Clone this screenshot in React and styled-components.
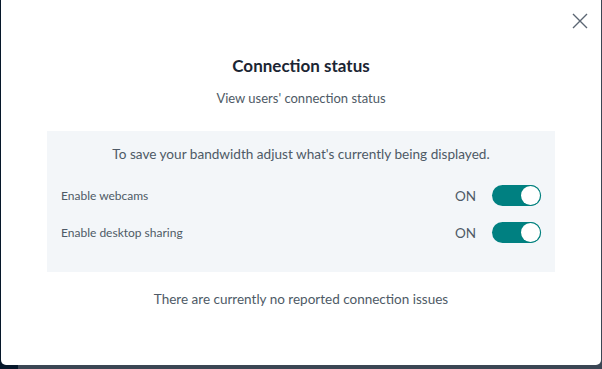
import React from "react";
import styled, { createGlobalStyle } from "styled-components";

// ========================================
// CONNECTION STATUS MODAL
// ========================================

const Global = createGlobalStyle`
  html, body {
    margin: 0;
    padding: 0;
    height: 369px;
    overflow: hidden;
    background: #3b4654;
    font-family: Lato, "Liberation Sans", sans-serif;
  }
`;

const Toggle = ({ on }) => (
  <ToggleRow>
    <ToggleLabel>{on ? "ON" : "OFF"}</ToggleLabel>
    <Track on={on ? 1 : 0}>
      <Knob />
    </Track>
  </ToggleRow>
);

const App = () => (
  <>
    <Global />
    <Backdrop>
      <Modal>
        <CloseButton aria-label="Close">
          <svg width="16" height="16" viewBox="0 0 16 16">
            <path d="M1 1 L15 15 M15 1 L1 15" stroke="#5b6673" strokeWidth="1.4" fill="none" />
          </svg>
        </CloseButton>
        <Title>Connection status</Title>
        <Subtitle>View users' connection status</Subtitle>
        <Panel>
          <PanelHint>To save your bandwidth adjust what's currently being displayed.</PanelHint>
          <SettingRow>
            <SettingLabel>Enable webcams</SettingLabel>
            <Toggle on />
          </SettingRow>
          <SettingRow>
            <SettingLabel>Enable desktop sharing</SettingLabel>
            <Toggle on />
          </SettingRow>
        </Panel>
        <Footer>There are currently no reported connection issues</Footer>
      </Modal>
    </Backdrop>
  </>
);

export default App;

// ========================================
// STYLES
// ========================================

const Backdrop = styled.div`
  height: 369px;
  padding: 0 1px 0 1px;
  box-sizing: border-box;
  background: linear-gradient(to right, #06172a 0 18px, #3b4654 18px);
`;

const Modal = styled.div`
  position: relative;
  height: 365px;
  background: #fff;
  border-radius: 0 0 5px 5px;
  display: flex;
  flex-direction: column;
  align-items: center;
  box-sizing: border-box;
  padding-top: 55px;
`;

const CloseButton = styled.button`
  position: absolute;
  top: 12px;
  right: 12px;
  width: 18px;
  height: 18px;
  padding: 0;
  border: 0;
  background: none;
  display: flex;
  align-items: center;
  justify-content: center;
`;

const Title = styled.h2`
  margin: 0;
  font-size: 17px;
  font-weight: 700;
  color: #1b2533;
  line-height: 22px;
`;

const Subtitle = styled.p`
  margin: 12px 0 0;
  font-size: 13px;
  color: #4e5a66;
  line-height: 18px;
`;

const Panel = styled.div`
  margin-top: 24px;
  width: 508px;
  height: 141px;
  box-sizing: border-box;
  background: #f3f6f9;
  padding: 14px 14px 0;
  display: flex;
  flex-direction: column;
`;

const PanelHint = styled.p`
  margin: 0 0 14px;
  text-align: center;
  font-size: 13.6px;
  color: #4e5a66;
  line-height: 18px;
`;

const SettingRow = styled.div`
  display: flex;
  align-items: center;
  justify-content: space-between;
  height: 37px;
`;

const SettingLabel = styled.span`
  font-size: 12px;
  color: #4e5a66;
`;

const ToggleRow = styled.div`
  display: flex;
  align-items: center;
  gap: 16px;
`;

const ToggleLabel = styled.span`
  font-size: 13.5px;
  color: #4e5a66;
`;

const Track = styled.div`
  width: 49px;
  height: 21px;
  border-radius: 11px;
  background: ${p => (p.on ? "#008081" : "#c4ccd5")};
  display: flex;
  align-items: center;
  justify-content: ${p => (p.on ? "flex-end" : "flex-start")};
  padding: 0 1px;
  box-sizing: border-box;
`;

const Knob = styled.div`
  width: 19px;
  height: 19px;
  border-radius: 50%;
  background: #fff;
  box-shadow: 0 0 0 1px #00807d;
`;

const Footer = styled.p`
  margin: 18px 0 0;
  font-size: 13.5px;
  color: #4e5a66;
  line-height: 18px;
`;
